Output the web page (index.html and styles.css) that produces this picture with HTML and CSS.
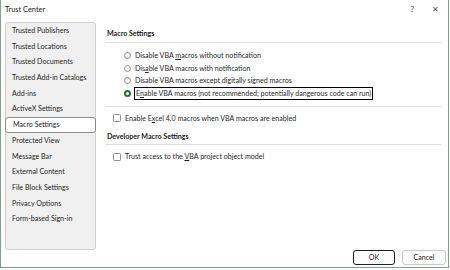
FILE: index.html
```html
<!DOCTYPE html>
<html>
<head>
<meta charset="utf-8">
<link rel="stylesheet" href="styles.css">
</head>
<body>
<div class="window">
  <div class="titlebar">
    <span class="title">Trust Center</span>
    <span class="controls"><span class="help">?</span><span class="close">✕</span></span>
  </div>
  <div class="content">
    <ul class="nav">
      <li>Trusted Publishers</li>
      <li>Trusted Locations</li>
      <li>Trusted Documents</li>
      <li>Trusted Add-in Catalogs</li>
      <li>Add-ins</li>
      <li>ActiveX Settings</li>
      <li class="active">Macro Settings</li>
      <li>Protected View</li>
      <li>Message Bar</li>
      <li>External Content</li>
      <li>File Block Settings</li>
      <li>Privacy Options</li>
      <li>Form-based Sign-in</li>
    </ul>
    <div class="main">
      <div class="section-head">Macro Settings</div>
      <div class="group radios">
        <div class="row"><span class="radio"></span><span class="label">Disable VBA <u>m</u>acros without notification</span></div>
        <div class="row"><span class="radio"></span><span class="label">Dis<u>a</u>ble VBA macros with notification</span></div>
        <div class="row"><span class="radio"></span><span class="label">Disable VBA macros except digitally signed macros</span></div>
        <div class="row"><span class="radio checked"></span><span class="label focus">E<u>n</u>able VBA macros (not recommended; potentially dangerous code can run)</span></div>
      </div>
      <div class="group checks">
        <div class="row"><span class="check"></span><span class="label">Enable E<u>x</u>cel 4.0 macros when VBA macros are enabled</span></div>
      </div>
      <div class="section-head second">Developer Macro Settings</div>
      <div class="group checks">
        <div class="row"><span class="check"></span><span class="label">Trust access to the <u>V</u>BA project object model</span></div>
      </div>
    </div>
  </div>
  <div class="footer">
    <button class="btn default">OK</button>
    <button class="btn">Cancel</button>
  </div>
</div>
</body>
</html>
```

FILE: styles.css
```css
* { box-sizing: border-box; }
html, body { margin: 0; padding: 0; background: #ffffff; }
body {
  font-family: "Lato", "Open Sans", sans-serif;
  font-size: 7.1px;
  color: #1a1a1a;
  width: 450px;
  height: 270px;
  overflow: hidden;
}
.window {
  width: 449px;
  height: 268px;
  border: 1px solid #7ea08c;
  border-top: none;
  display: flex;
  flex-direction: column;
  background: #fff;
}
.titlebar {
  height: 22px;
  display: flex;
  align-items: center;
  justify-content: space-between;
  padding: 0 0 4px 4px;
}
.title { font-size: 7.4px; color: #222; }
.controls { display: flex; align-items: center; }
.help { font-size: 8px; color: #444; margin-right: 18px; }
.close { font-size: 8px; color: #555; margin-right: 9px; }
.content {
  flex: 1;
  display: flex;
  padding-left: 4px;
}
.nav {
  list-style: none;
  margin: 0;
  padding: 0;
  width: 91px;
  height: 228px;
  background: #f0f0f0;
  border: 1px solid #cfcfcf;
  border-radius: 3px;
}
.nav li {
  height: 15.7px;
  line-height: 15.7px;
  padding-left: 6px;
  white-space: nowrap;
  color: #1f1f1f;
}
.nav li.active {
  background: #fff;
  border: 1px solid #8c8c8c;
  border-radius: 3px;
  margin: 0 -1px;
  line-height: 13.7px;
  padding-left: 7px;
}
.main {
  margin-left: 9px;
  width: 336px;
  display: flex;
  flex-direction: column;
}
.section-head {
  font-weight: bold;
  height: 21px;
  line-height: 10px;
  padding: 7px 0 0 2px;
  border-bottom: 1px solid #e0e0e0;
  color: #1a1a1a;
}
.section-head.second { height: 21px; padding-top: 8px; }
.radios { padding: 6px 0 6px 19px; border-bottom: 1px solid #e0e0e0; }
.checks { padding: 5px 0 0 8px; }
.row {
  display: flex;
  align-items: center;
  height: 12.7px;
  white-space: nowrap;
}
.radio {
  width: 7px;
  height: 7px;
  border: 1px solid #8d8d8d;
  border-radius: 50%;
  margin-right: 4px;
  flex: none;
  background: #fff;
}
.radio.checked {
  border: 2px solid #2b6b44;
}
.check {
  width: 8px;
  height: 8px;
  border: 1px solid #8d8d8d;
  border-radius: 1.5px;
  margin-right: 4px;
  flex: none;
  background: #fff;
}
.label { color: #1f1f1f; }
.label u { text-decoration-thickness: 0.6px; text-underline-offset: 1px; }
.focus {
  outline: 1px solid #000;
  outline-offset: 0;
  padding: 0 1px;
  line-height: 11px;
}
.footer {
  display: flex;
  justify-content: flex-end;
  gap: 7px;
  padding: 0 2px 0 0;
  height: 17px;
}
.btn {
  font-family: inherit;
  font-size: 7.1px;
  width: 44px;
  height: 15px;
  background: #fdfdfd;
  border: 1px solid #c9c9c9;
  border-radius: 3px;
  color: #1a1a1a;
  padding: 0;
}
.btn.default { border: 1px solid #1f1f1f; width: 42px; }
```
